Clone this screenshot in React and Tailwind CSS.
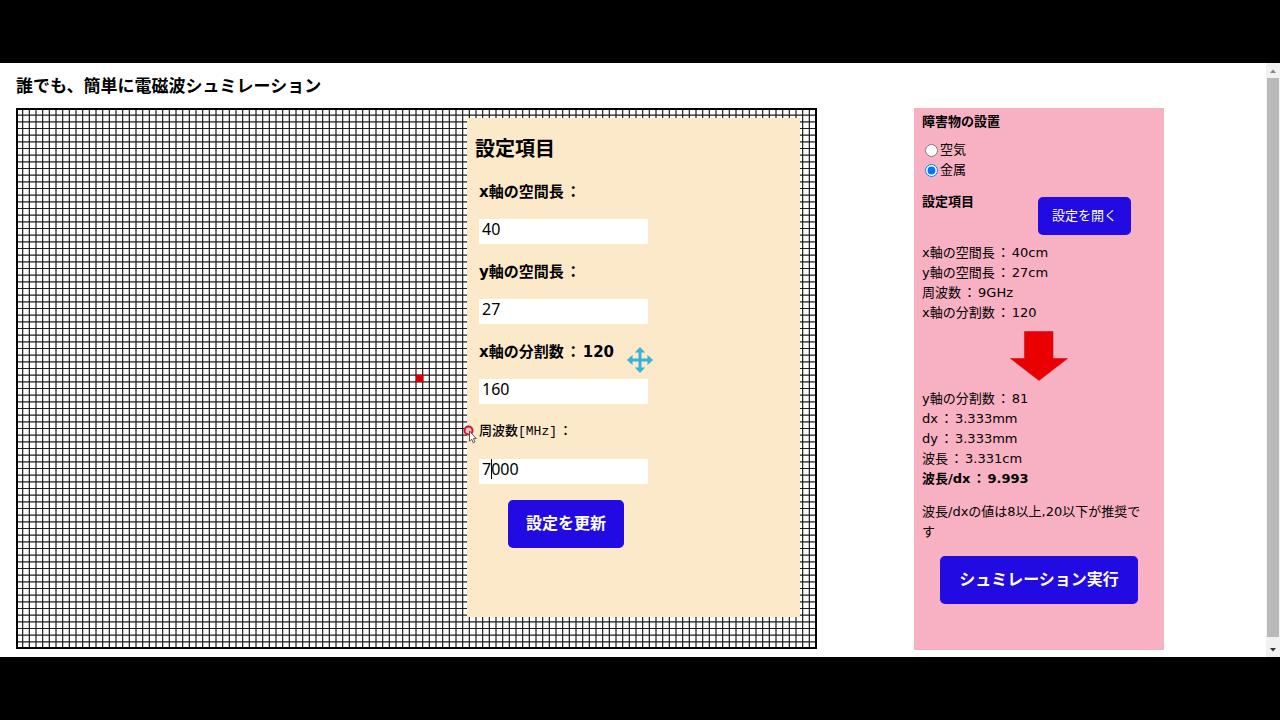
import React from "react";

const COLS = 120;
const ROWS = 81;
const CELL = 800 / COLS;

function FieldGrid() {
  const w = COLS * CELL;
  const h = ROWS * CELL;
  return (
    <svg viewBox="0 0 801 541" className="block w-full" role="img" aria-label="解析領域">
      <g stroke="#1c1c1c" strokeWidth="1.2">
        {Array.from({ length: COLS - 1 }, (_, i) => (
          <line key={"c" + i} x1={(i + 1) * CELL} x2={(i + 1) * CELL} y1="0" y2={h} />
        ))}
        {Array.from({ length: ROWS - 1 }, (_, i) => (
          <line key={"r" + i} x1="0" x2={w} y1={(i + 1) * CELL + 0.5} y2={(i + 1) * CELL + 0.5} />
        ))}
      </g>
      <rect x="1" y="1" width="799" height="539" fill="none" stroke="#000" strokeWidth="2" />
      <rect x={60 * CELL} y={40 * CELL} width="7.5" height="7.5" fill="#d80000" />
    </svg>
  );
}

function Pair({ name, value }) {
  return (
    <>
      {name}
      <span className="mx-[2px]">：</span>
      {value}
    </>
  );
}

function Field({ id, name, note, value, mono, caret }) {
  return (
    <div className="flex flex-col items-start gap-[15px]">
      <label
        htmlFor={id}
        className={
          mono
            ? "font-['Liberation_Mono','Noto_Sans_CJK_JP',monospace] text-[13px] leading-6 font-medium"
            : "text-[15px] leading-6 font-bold"
        }
      >
        <Pair name={name} value={note} />
      </label>
      <div className="relative">
        <input
          id={id}
          type="text"
          defaultValue={value}
          className="block h-[25px] w-[169px] bg-white px-[3px] pb-[6px] font-['Noto_Sans',sans-serif] text-base leading-5 outline-none"
        />
        {caret && <span className="absolute top-0 left-3 h-5 w-px bg-black" />}
      </div>
    </div>
  );
}

function SettingsDialog() {
  return (
    <section className="absolute top-[10px] left-[451px] h-[499px] w-[333px] bg-[#fbe9c9] px-2 pt-[17px]">
      <h2 className="text-xl leading-7 font-bold">設定項目</h2>
      <div className="mt-[17px] flex flex-col gap-4 pl-1">
        <Field id="lx" name="x軸の空間長" value="40" />
        <Field id="ly" name="y軸の空間長" value="27" />
        <Field id="nx" name="x軸の分割数" note="120" value="160" />
        <Field id="freq" name="周波数[MHz]" value="7000" mono caret />
      </div>
      <button type="button" className="mt-4 ml-[33px] h-12 w-[116px] rounded-[5px] bg-[#210ae2] text-base font-bold text-white">
        設定を更新
      </button>
    </section>
  );
}

function SidePanel() {
  return (
    <aside className="flex h-[542px] w-[250px] shrink-0 flex-col bg-[#f8b0c3] px-2 pt-1 text-[13px] leading-5">
      <h3 className="font-bold">障害物の設置</h3>
      <div className="mt-2 pl-[3px]">
        <label className="flex items-center gap-[2px]">
          <input type="radio" name="material" className="h-[13px] w-[13px]" />
          空気
        </label>
        <label className="flex items-center gap-[2px]">
          <input type="radio" name="material" defaultChecked className="h-[13px] w-[13px]" />
          金属
        </label>
      </div>
      <div className="mt-3 flex items-start justify-between pr-[25px]">
        <h3 className="font-bold">設定項目</h3>
        <button type="button" className="mt-[5px] h-[38px] w-[93px] rounded-[5px] bg-[#210ae2] text-white">
          設定を開く
        </button>
      </div>
      <ul className="mt-2">
        <li><Pair name="x軸の空間長" value="40cm" /></li>
        <li><Pair name="y軸の空間長" value="27cm" /></li>
        <li><Pair name="周波数" value="9GHz" /></li>
        <li><Pair name="x軸の分割数" value="120" /></li>
      </ul>
      <svg viewBox="0 0 58 50" className="mt-2 h-[50px] w-[58px] self-center" aria-hidden="true">
        <path d="M14.5 0.5H43V27.5H57.5L29 49.5L0.5 27.5H14.5Z" fill="#ea0000" stroke="#c4101c" strokeWidth="0.6" />
      </svg>
      <ul className="mt-2">
        <li><Pair name="y軸の分割数" value="81" /></li>
        <li><Pair name="dx" value="3.333mm" /></li>
        <li><Pair name="dy" value="3.333mm" /></li>
        <li><Pair name="波長" value="3.331cm" /></li>
        <li className="font-bold"><Pair name="波長/dx" value="9.993" /></li>
      </ul>
      <p className="mt-[13px] pr-2">波長/dxの値は8以上,20以下が推奨です</p>
      <button type="button" className="mt-[14px] h-12 w-[198px] self-center rounded-[5px] bg-[#210ae2] text-base font-bold text-white">
        シュミレーション実行
      </button>
    </aside>
  );
}

function ScrollTrack() {
  return (
    <div className="flex w-[14px] shrink-0 flex-col items-center bg-[#f1f1f1]" aria-hidden="true">
      <svg viewBox="0 0 14 15" className="h-[15px] w-[14px]">
        <path d="M4 10L7 6.5L10 10Z" fill="#858585" />
      </svg>
      <div className="w-3 flex-1 bg-[#b9b9b9]" />
      <svg viewBox="0 0 14 20" className="h-5 w-[14px]">
        <path d="M4 11L7 14.5L10 11Z" fill="#333" />
      </svg>
    </div>
  );
}

function MoveHandle() {
  return (
    <svg viewBox="0 0 26 26" className="absolute top-1/2 left-1/2 h-[26px] w-[26px] -translate-x-1/2 -translate-y-1/2" aria-hidden="true">
      <path
        d="M13 0L18.2 5.5H14.5V11.5H20.5V7.8L26 13L20.5 18.2V14.5H14.5V20.5H18.2L13 26L7.8 20.5H11.5V14.5H5.5V18.2L0 13L5.5 7.8V11.5H11.5V5.5H7.8Z"
        fill="#36b3d6"
      />
    </svg>
  );
}

function Pointer() {
  return (
    <svg viewBox="0 0 16 20" className="absolute top-[317px] left-[447px] h-5 w-4" aria-hidden="true">
      <circle cx="5.5" cy="5.5" r="4" fill="#f6c3c3" stroke="#cf1530" strokeWidth="2" />
      <path d="M6.5 6V16.2L8.7 14.2L10.2 17.8L11.9 17L10.4 13.6H13.3Z" fill="#fff" stroke="#333" strokeWidth="0.8" />
    </svg>
  );
}

export default function App() {
  return (
    <div className="relative flex min-h-screen items-center bg-black font-['DejaVu_Sans','Noto_Sans_CJK_JP',sans-serif] text-black">
      <div className="flex w-full bg-white">
        <main className="min-w-0 flex-1 px-4 pb-[7px]">
          <h1 className="pt-3 pb-[11px] text-[17px] leading-[22px] font-bold">誰でも、簡単に電磁波シュミレーション</h1>
          <div className="flex items-start gap-[97px]">
            <div className="relative w-[801px] shrink-0">
              <FieldGrid />
              <SettingsDialog />
              <Pointer />
            </div>
            <SidePanel />
          </div>
        </main>
        <ScrollTrack />
      </div>
      <MoveHandle />
    </div>
  );
}
